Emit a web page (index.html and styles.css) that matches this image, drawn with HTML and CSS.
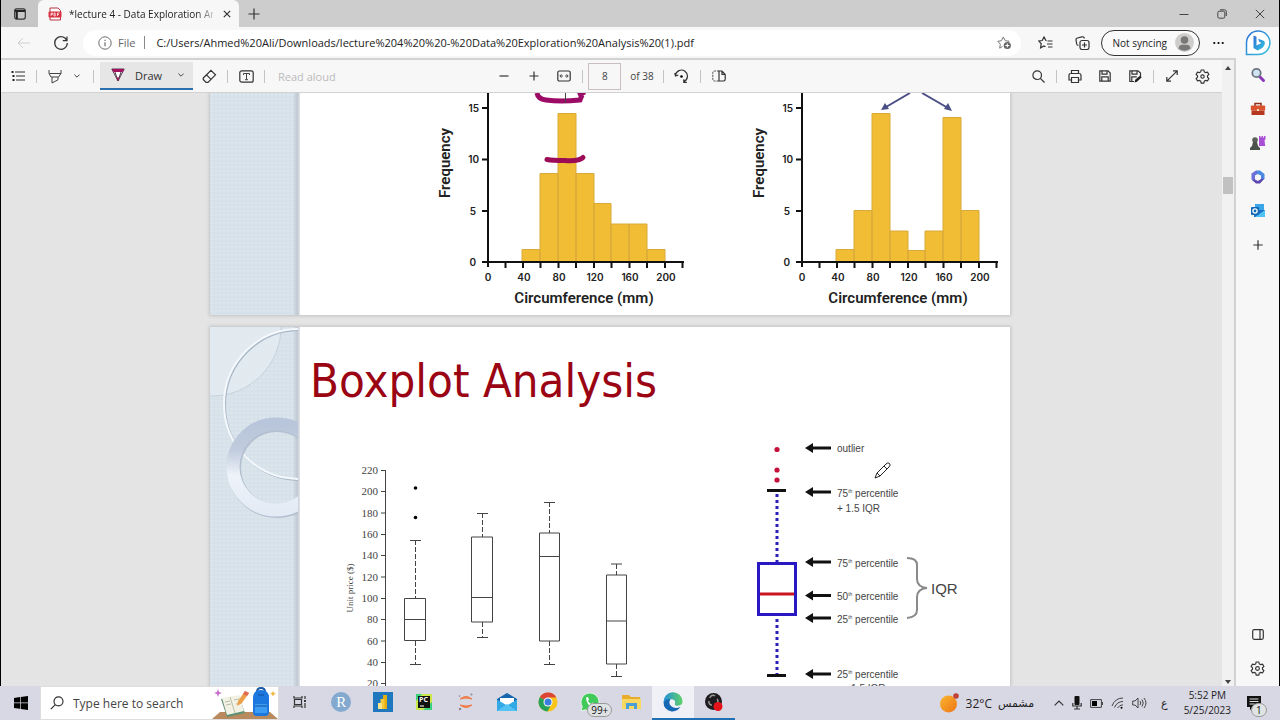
FILE: index.html
```html
<!DOCTYPE html>
<html lang="en">
<head>
<meta charset="utf-8">
<title>lecture 4 - Data Exploration Analysis</title>
<link rel="stylesheet" href="styles.css">
</head>
<body>
<div class="desktop">
  <div class="browser">
    <header class="tabs">
      <button class="ib tab-menu" aria-label="Tab actions"><svg width="12" height="12" viewBox="0 0 12 12"><rect x=".7" y=".9" width="10.6" height="10.2" rx="2" class="ln bold"/><path d="M1 3h10M2.800 3v8" class="ln heavy"/></svg></button>
      <div class="tab">
        <svg width="14" height="14" viewBox="0 0 14 14"><path d="M2 1h8l2.500 2.500V13H2z" fill="#fff" stroke="#b5343e"/><rect x=".5" y="4.500" width="13" height="6" rx="1" fill="#d9303f"/><path d="M3 9V6h1.500v1.500H3M6 6v3h1.200V6zM9.500 9V6h2M9.500 7.500h1.500" fill="none" stroke="#fff" stroke-width=".7"/></svg>
        <span class="tab-title">*lecture 4 - Data Exploration Ana</span>
        <button class="tab-close" aria-label="Close tab"><svg width="8" height="8" viewBox="0 0 8 8"><path d="M.8.8l6.400 6.400M7.200.8L.8 7.200" class="ln bold"/></svg></button>
      </div>
      <button class="ib" aria-label="New tab"><svg width="12" height="12" viewBox="0 0 12 12"><path d="M6 .5v11M.5 6h11" class="ln bold"/></svg></button>
      <div class="window-buttons">
        <button aria-label="Minimize"><svg width="10" height="10" viewBox="0 0 10 10"><path d="M.5 5.500h9" class="ln"/></svg></button>
        <button aria-label="Restore"><svg width="10" height="10" viewBox="0 0 10 10"><rect x=".8" y="2.200" width="7" height="7" rx="1.500" class="ln"/><path d="M3 .8h4.500Q9.300.8 9.300 2.600V7" class="ln"/></svg></button>
        <button aria-label="Close"><svg width="10" height="10" viewBox="0 0 10 10"><path d="M.8.8l8.400 8.400M9.200.8L.8 9.200" class="ln"/></svg></button>
      </div>
    </header>

    <div class="below">
      <div class="main">
        <div class="address-row">
          <button class="nav" aria-label="Back"><svg width="14" height="12" viewBox="0 0 14 12"><path d="M13 6H1M6 1L1 6l5 5" fill="none" stroke="#cfcfcf"/></svg></button>
          <button class="nav" aria-label="Refresh"><svg width="16" height="16" viewBox="0 0 16 16"><path d="M13.800 5.500A6.300 6.300 0 1 0 14.300 8M14 1.500v4.200H9.800" class="ln bold"/></svg></button>
          <div class="omnibox">
            <svg width="14" height="14" viewBox="0 0 14 14"><circle cx="7" cy="7" r="6.200" fill="none" stroke="#6b6b6b"/><path d="M7 6.200v4M7 3.700v1.200" stroke="#6b6b6b" stroke-width="1.200"/></svg>
            <span class="scheme">File</span><span class="bar"></span>
            <input class="url" aria-label="Address" value="C:/Users/Ahmed%20Ali/Downloads/lecture%204%20%20-%20Data%20Exploration%20Analysis%20(1).pdf">
            <button class="fav" aria-label="Add to favorites"><svg width="15" height="15" viewBox="0 0 15 15"><path d="M5.500 11.500l-2.800 1.700.6-4L.8 6.300l3.600-.6L6.300 2l1.900 3.700 4 .6-1.700 1.500" fill="none" stroke="#777"/><circle cx="10.300" cy="10.500" r="3.600" fill="#666"/><path d="M10.300 8.500v4M8.300 10.500h4" stroke="#fff"/></svg></button>
          </div>
          <button class="act" aria-label="Favorites"><svg width="15" height="14" viewBox="0 0 15 14"><path d="M8.500 4.700L7.800 4.300 6 1 4.200 4.500.8 5l2.400 2.600-.6 4.200L6 9.900l1.500.8M9.500 5h5M9 8h5.500M10 11h4.500" class="ln bold"/></svg></button>
          <button class="act" aria-label="Collections"><svg width="15" height="14" viewBox="0 0 15 14"><rect x="5" y="4.500" width="9" height="9" rx="2" class="ln bold"/><path d="M9.500 6.500v5M7 9h5M3.500 9.500Q2 9.500 1.700 8L1 4Q.8 2.500 2.300 2L7 .8Q9 .4 9.400 2.500" class="ln bold"/></svg></button>
          <button class="profile"><span>Not syncing</span><svg width="19" height="19" viewBox="0 0 19 19"><circle cx="9.500" cy="9.500" r="9.500" fill="#cfcdcb"/><circle cx="9.500" cy="7" r="3.800" fill="#7a7876"/><path d="M3.500 15.500Q4 11.700 7 11.700h5q3 0 3.500 3.800Q9.500 20 3.500 15.500" fill="#7a7876"/></svg></button>
          <button class="more" aria-label="Settings and more"><svg width="11" height="4" viewBox="0 0 11 4"><circle cx="1.300" cy="2" r="1.100"/><circle cx="5.500" cy="2" r="1.100"/><circle cx="9.700" cy="2" r="1.100"/></svg></button>
        </div>

        <div class="viewer">
          <div class="document">
            <div class="pdfbar">
              <div class="group">
                <button class="tool small" aria-label="Contents"><svg width="15" height="12" viewBox="0 0 15 12"><path d="M4 2h10M5 6h9M5 10h9" class="ln bold"/><path d="M.5 2h2M1.500 6h2M1.500 10h2" class="ln heavy"/></svg></button>
                <i class="sep wide"></i>
                <button class="tool small" aria-label="Highlight"><svg width="14" height="15" viewBox="0 0 14 15"><path d="M1 1v3.500L3 8h7.500L13 4.500V1M1.500 4.500H13M4 8v6l6-3.200V8" class="ln"/></svg></button>
                <button class="drop" aria-label="Highlight options"><svg width="6" height="4" viewBox="0 0 6 4"><path d="M.4.6L3 3.200 5.600.6" class="ln"/></svg></button>
                <i class="sep wide"></i>
                <button class="draw"><svg width="14" height="14" viewBox="0 0 14 14"><path d="M.8 1h12.400L7 13z" fill="#fff" stroke="#513c4c"/><path d="M.8 1h12.400l-1.500 3H2.500z" fill="#a3125e"/><path d="M4 4l3 9 3-9" fill="none" stroke="#513c4c"/><path d="M5.500 9.500h3L7 13z" fill="#a3125e"/></svg><span>Draw</span><svg width="6" height="4" viewBox="0 0 6 4"><path d="M.4.6L3 3.200 5.600.6" class="ln"/></svg></button>
                <button class="tool small" aria-label="Erase"><svg width="15" height="15" viewBox="0 0 15 15"><path d="M9 1.300l4.500 4.500-7.500 7.500H4L1.300 10.500Q.8 9.800 1.300 9zM4.500 5.800L9 10.300" class="ln bold"/></svg></button>
                <i class="sep wide"></i>
                <button class="tool small" aria-label="Add text"><svg width="15" height="13" viewBox="0 0 15 13"><rect x=".8" y=".8" width="13.400" height="11.400" rx="2" class="ln bold"/><path d="M4.500 5V3.500h6V5M7.500 3.500v6M6 9.700h3" class="ln"/></svg></button>
                <i class="sep wide"></i>
                <button class="read" disabled>Read aloud</button>
              </div>
              <div class="group">
                <button class="tool" aria-label="Zoom out"><svg width="10" height="10" viewBox="0 0 10 10"><path d="M.5 5h9" class="ln bold"/></svg></button>
                <button class="tool" aria-label="Zoom in"><svg width="10" height="10" viewBox="0 0 10 10"><path d="M.5 5h9M5 .5v9" class="ln bold"/></svg></button>
                <button class="tool" aria-label="Fit to width"><svg width="14" height="12" viewBox="0 0 14 12"><rect x=".8" y="1" width="12.400" height="10" rx="1.500" class="ln bold"/><path d="M3 6h3M8 6h3M4.500 4.300L2.800 6l1.700 1.700M9.500 4.300L11.200 6 9.500 7.700" class="ln"/></svg></button>
                <i class="sep"></i>
                <label class="page"><input value="8" aria-label="Page number"><span>of 38</span></label>
                <i class="sep"></i>
                <button class="tool" aria-label="Rotate"><svg width="15" height="15" viewBox="0 0 15 15"><path d="M1.500 6.500A6 6 0 1 1 10 12.500M.8 4l.7 3 2.800-1M12.800 13.300H9.800v-3" class="ln bold"/><circle cx="7.500" cy="7.500" r="1.300"/></svg></button>
                <i class="sep"></i>
                <button class="tool" aria-label="Page view"><svg width="14" height="12" viewBox="0 0 14 12"><path d="M7 1v10h4.500q1.700 0 1.700-1.700V4.500L10 1zM10 1v3.500h3" class="ln bold"/><path d="M7 1H2.500Q.8 1 .8 2.700v6.600Q.8 11 2.500 11H7" class="ln" stroke-dasharray="2 1"/></svg></button>
              </div>
              <div class="group end">
                <button class="tool" aria-label="Find"><svg width="13" height="13" viewBox="0 0 13 13"><circle cx="5.200" cy="5.200" r="4.300" class="ln bold"/><path d="M8.300 8.300l4.200 4.200" class="ln bold"/></svg></button>
                <i class="sep"></i>
                <button class="tool" aria-label="Print"><svg width="14" height="13" viewBox="0 0 14 13"><path d="M3.500 3.500v-3h7v3M3.500 10H1V5.500q0-2 2-2h8q2 0 2 2V10h-2.500M3.500 7.500h7v5h-7z" class="ln bold"/></svg></button>
                <button class="tool" aria-label="Save"><svg width="12" height="12" viewBox="0 0 12 12"><path d="M.8.8H9l2.200 2.200v8.200H.8zM3 .8v3.400h5V.8M2.800 11V6.800h6.400V11" class="ln bold"/></svg></button>
                <button class="tool" aria-label="Save as"><svg width="13" height="13" viewBox="0 0 13 13"><path d="M5 11.500H.8V.8H9l2.500 2.200v3M3 .8v3.400h5V.8M2.800 11V6.800h5" class="ln bold"/><path d="M5.500 12.500l.7-2.700 5-4.300 1.500 1.700-4.700 4.600z" fill="#222"/></svg></button>
                <i class="sep"></i>
                <button class="tool" aria-label="Full screen"><svg width="12" height="12" viewBox="0 0 12 12"><path d="M.8 11.200L11.200.8M7 .8h4.200V5M.8 7v4.200H5" class="ln bold"/></svg></button>
                <button class="tool" aria-label="PDF settings"><svg width="15" height="15" viewBox="0 0 16 16"><path d="M6.600 1h2.800l.5 2 1.500.9 2-.6 1.400 2.400-1.500 1.500v1.600l1.500 1.500-1.400 2.400-2-.6-1.500.9-.5 2H6.600l-.5-2-1.500-.9-2 .6-1.400-2.400 1.500-1.500V7.200L1.200 5.700l1.400-2.400 2 .6L6.100 3z" class="ln bold"/><circle cx="8" cy="8" r="1.800" class="ln bold"/></svg></button>
              </div>
            </div>

            <div class="pages">
              <section class="slide">
                <div class="rail"></div>
                <div class="slide-body histograms">
                  <svg class="chart" width="270" height="222" viewBox="0 0 270 222">
                    <g class="bars"><path d="M92 156.500h18V169H92zM110 80.500h18V169h-18zM128 20.500h18V169h-18zM146 80.500h18V169h-18zM164 110.500h17V169h-17zM181 131h18v38h-18zM199 131h18v38h-18zM217 156.500h18V169h-18z"/></g>
                    <path class="axis" d="M58 0v174M52 169h202M52 15h6M52 66.500h6M52 118h6M75.500 169v6M93 169v6M110.500 169v6M128.500 169v6M146 169v6M164 169v6M181.500 169v6M199.500 169v6M217 169v6M235 169v6M252.500 169v6"/>
                    <g class="ticks end-text"><text x="49" y="19">15</text><text x="49" y="70">10</text><text x="46" y="122">5</text><text x="46" y="173">0</text></g>
                    <g class="ticks mid-text"><text x="58" y="188">0</text><text x="94" y="188">40</text><text x="129" y="188">80</text><text x="165" y="188">120</text><text x="200" y="188">160</text><text x="236" y="188">200</text></g>
                    <g class="titles mid-text"><text x="154" y="210">Circumference (mm)</text><text transform="translate(20 70) rotate(-90)">Frequency</text></g>
                    <path d="M107 0q1 6 9 7q14 2 34 0l2-5M148 2l7-3" fill="none" stroke="#9c0b66" stroke-width="5"/>
                    <path d="M135.500 0v10" stroke="#444"/>
                    <path d="M117 66.500q5 1 18 1q14 1 18-3" fill="none" stroke="#9c0b55" stroke-width="5" stroke-linecap="round"/>
                  </svg>
                  <svg class="chart" width="270" height="222" viewBox="0 0 270 222">
                    <g class="bars"><path d="M92 156.500h18V169H92zM110 117.500h18V169h-18zM128 20.500h18V169h-18zM146 138h18v31h-18zM164 157.500h17V169h-17zM181 138h18v31h-18zM199 24.500h18V169h-18zM217 117.500h18V169h-18z"/></g>
                    <path class="axis" d="M58 0v174M52 169h202M52 15h6M52 66.500h6M52 118h6M75.500 169v6M93 169v6M110.500 169v6M128.500 169v6M146 169v6M164 169v6M181.500 169v6M199.500 169v6M217 169v6M235 169v6M252.500 169v6"/>
                    <g class="ticks end-text"><text x="49" y="19">15</text><text x="49" y="70">10</text><text x="46" y="122">5</text><text x="46" y="173">0</text></g>
                    <g class="ticks mid-text"><text x="58" y="188">0</text><text x="94" y="188">40</text><text x="129" y="188">80</text><text x="165" y="188">120</text><text x="200" y="188">160</text><text x="236" y="188">200</text></g>
                    <g class="titles mid-text"><text x="154" y="210">Circumference (mm)</text><text transform="translate(20 70) rotate(-90)">Frequency</text></g>
                    <path d="M166 0l-24 14M178 0l26 15" stroke="#4a4f85" stroke-width="2"/>
                    <path d="M137 17l4-7 4 6zM208 18l-4-8-4 6z" fill="#4a4f85"/>
                  </svg>
                </div>
              </section>

              <section class="slide second">
                <div class="rail">
                  <svg width="88" height="370" viewBox="0 0 88 370">
                    <defs><linearGradient id="ring" x1="0" y1="0" x2="0" y2="1"><stop offset="0" stop-color="#b9c5da"/><stop offset=".3" stop-color="#c0cbdd"/><stop offset=".6" stop-color="#eef3fa"/><stop offset="1" stop-color="#e4ebf5"/></linearGradient></defs>
                    <circle cx="2" cy="0" r="69" fill="#e6eef3" fill-opacity=".65" stroke="#c5d2dc"/>
                    <circle cx="90" cy="78" r="75" fill="none" stroke="#a9b8c8" stroke-width="2"/>
                    <circle cx="89" cy="77" r="75" fill="none" stroke="#f5f9fc" stroke-width="2"/>
                    <circle cx="67" cy="141" r="43" fill="none" stroke="#b3c0d0" stroke-width="14"/>
                    <circle cx="66" cy="140" r="43" fill="none" stroke="url(#ring)" stroke-width="13"/>
                  </svg>
                </div>
                <div class="slide-body">
                  <h1>Boxplot Analysis</h1>
                  <div class="figures">
                    <svg class="chart" width="310" height="260" viewBox="340 437 310 260">
                      <path class="thin" d="M385.500 470v230M381 470.500h4M381 491.500h4M381 513h4M381 534.500h4M381 555.500h4M381 577h4M381 598.500h4M381 619.500h4M381 641h4M381 662.500h4M381 683.500h4"/>
                      <g class="prices end-text"><text x="378" y="474">220</text><text x="378" y="495">200</text><text x="378" y="517">180</text><text x="378" y="538">160</text><text x="378" y="559">140</text><text x="378" y="581">120</text><text x="378" y="602">100</text><text x="378" y="623">80</text><text x="378" y="645">60</text><text x="378" y="666">40</text><text x="378" y="687">20</text></g>
                      <text class="prices price-title mid-text" transform="translate(353 588) rotate(-90)">Unit price ($)</text>
                      <path class="thin" d="M404.500 598.500h21v42h-21zM404.500 619.500h21M410 540.500h11M410 664.500h11M471.500 537h21v85h-21zM471.500 597.500h21M477 513.500h11M477 637.500h11M539.500 533h20v108h-20zM539.500 556.500h20M544 502.500h11M544 664.500h11M606.500 575h20v89h-20zM606.500 621h20M611 564h11M611 676.500h11"/>
                      <path class="thin" stroke-dasharray="5 2" d="M415.500 540v58M415.500 641v23M482.500 513v24M482.500 622v15M549.500 502v31M549.500 641v23M616.500 564v11M616.500 664v12"/>
                      <circle cx="415.500" cy="488" r="1.800"/><circle cx="415.500" cy="517.500" r="1.800"/>
                    </svg>
                    <svg class="chart" width="220" height="260" viewBox="750 437 220 260">
                      <g fill="#c4123c"><circle cx="777" cy="449.500" r="2.600"/><circle cx="777" cy="470" r="2.600"/><circle cx="777" cy="480" r="2.600"/></g>
                      <path d="M777 494v68M777 619v56" stroke="#2a1fb8" stroke-width="3" stroke-dasharray="3 3"/>
                      <path d="M767 490.500h19M767 675.500h19" stroke="#111" stroke-width="3"/>
                      <path d="M758.500 563.500h37v51h-37z" fill="none" stroke="#2a18c0" stroke-width="3"/>
                      <path d="M760 594h34" stroke="#c9151e" stroke-width="3"/>
                      <path d="M810 448h21M810 492h21M810 562h21M810 595.500h21M810 618h21M810 674h21" stroke="#111" stroke-width="3"/>
                      <path d="M805 448l8-5v10zM805 492l8-5v10zM805 562l8-5v10zM805 595.500l8-5v10zM805 618l8-5v10zM805 674l8-5v10z" fill="#111"/>
                      <g class="notes"><text x="837" y="452">outlier</text><text x="837" y="497">75<tspan class="sup" dy="-4">th</tspan><tspan dy="4"> percentile</tspan></text><text x="837" y="512">+ 1.5 IQR</text><text x="837" y="567">75<tspan class="sup" dy="-4">th</tspan><tspan dy="4"> percentile</tspan></text><text x="837" y="600">50<tspan class="sup" dy="-4">th</tspan><tspan dy="4"> percentile</tspan></text><text x="837" y="623">25<tspan class="sup" dy="-4">th</tspan><tspan dy="4"> percentile</tspan></text><text x="837" y="678">25<tspan class="sup" dy="-4">th</tspan><tspan dy="4"> percentile</tspan></text><text x="845" y="692">- 1.5 IQR</text><text class="iqr" x="931" y="594">IQR</text></g>
                      <path d="M907 558q10 0 10 7v14q0 8 10 9q-10 1-10 9v13q0 7-10 8" fill="none" stroke="#8a8a8a" stroke-width="2"/>
                      <path d="M875 478l2-5 9-9q2-2 3.500-.5t-.5 3.500l-9 9zM877 473l3 3M884 466l3 3" fill="#fff" stroke="#222"/>
                    </svg>
                  </div>
                </div>
              </section>
            </div>
          </div>
          <div class="scrollbar"><svg width="6" height="4" viewBox="0 0 6 4"><path d="M0 4l3-4 3 4z" fill="#444"/></svg><div class="track"><div class="thumb"></div></div><svg width="6" height="4" viewBox="0 0 6 4"><path d="M0 0l3 4 3-4z" fill="#444"/></svg></div>
        </div>
      </div>

      <aside class="sidebar">
        <button class="bing" aria-label="Bing"><svg width="26" height="26" viewBox="0 0 26 26"><defs><linearGradient id="b1" x1="0" y1="0" x2="1" y2="1"><stop offset="0" stop-color="#2c6fd6"/><stop offset="1" stop-color="#35c4dd"/></linearGradient></defs><path d="M1.500 24.500V13A11.700 11.700 0 1 1 13 24.500z" fill="#fff" stroke="url(#b1)" stroke-width="1.500"/><path d="M8.500 5.500l3 1.200v8.800l5-2.600-2.300-1.200-1-3 6 2.300q1 1 .5 3.500l-2 3.200-5.200 2.800-4-2.500z" fill="url(#b1)"/></svg></button>
        <button aria-label="Search"><svg width="16" height="16" viewBox="0 0 16 16"><path d="M9.500 9.500l4 4" stroke="#8a37b8" stroke-width="3" stroke-linecap="round"/><circle cx="6.500" cy="6" r="4.200" fill="#cfe3f3" stroke="#6c7480" stroke-width="1.800"/></svg></button>
        <button aria-label="Shopping tools"><svg width="16" height="16" viewBox="0 0 16 16"><path d="M5 5V2.500h6V5" fill="none" stroke="#8c2e19" stroke-width="1.500"/><rect x=".8" y="4.500" width="14.400" height="5" rx="1" fill="#d9532e"/><path d="M1.500 9.500h13V14h-13z" fill="#b53920"/><rect x="7" y="8" width="2" height="2" fill="#f8d9b0"/></svg></button>
        <button aria-label="Games"><svg width="16" height="16" viewBox="0 0 16 16"><path d="M9 1h1.500v1.500h1V1H13v1.500h1V1h1.500v3.500l-1 .5.700 6H9z" fill="#a94fd6"/><circle cx="5" cy="5" r="2.800" fill="#5a5f59"/><path d="M3 7h4l1 4 2 2v2H0v-2l2-2z" fill="#4b514b"/></svg></button>
        <button aria-label="Microsoft 365"><svg width="16" height="16" viewBox="0 0 16 16"><path d="M6 1.500L1.500 4.500v6L5 12V6.500L9.500 4z" fill="#6b6fd8"/><path d="M6 1.500h4L14.500 5v5L11 11V6.500L7.500 5z" fill="#4a8ae0"/><path d="M14.500 9.500L10 14.500H6L2 11l3-.5L8 12l3-2z" fill="#5c46b0"/></svg></button>
        <button aria-label="Outlook"><svg width="16" height="16" viewBox="0 0 16 16"><path d="M5 1h9v7H5z" fill="#38a6e8"/><path d="M4 7h11v7H4z" fill="#1b6ec2"/><path d="M5 14l10-7v7z" fill="#4fc3f2"/><rect x="1" y="4" width="8" height="8" rx="1" fill="#1268b8"/><circle cx="5" cy="8" r="2.100" fill="none" stroke="#fff" stroke-width="1.300"/></svg></button>
        <button aria-label="Customize"><svg width="10" height="10" viewBox="0 0 10 10"><path d="M5 .3v9.400M.3 5h9.400" class="ln bold"/></svg></button>
        <span class="spacer"></span>
        <button aria-label="Hide sidebar"><svg width="12" height="11" viewBox="0 0 12 11"><rect x=".7" y=".7" width="10.600" height="9.600" rx="1.500" class="ln bold"/><path d="M8 1v9" class="ln bold"/></svg></button>
        <button aria-label="Sidebar settings"><svg width="15" height="15" viewBox="0 0 16 16"><path d="M6.600 1h2.800l.5 2 1.500.9 2-.6 1.400 2.400-1.500 1.500v1.600l1.500 1.500-1.400 2.400-2-.6-1.500.9-.5 2H6.600l-.5-2-1.500-.9-2 .6-1.400-2.400 1.500-1.500V7.200L1.200 5.700l1.400-2.400 2 .6L6.100 3z" class="ln bold"/><circle cx="8" cy="8" r="2" class="ln bold"/></svg></button>
      </aside>
    </div>
  </div>

  <footer class="taskbar">
    <button class="start" aria-label="Start"><svg width="14" height="14" viewBox="0 0 14 14"><path d="M0 2l6-.9v5.500H0zM6.700 1L14 0v6.600H6.700zM0 7.300h6v5.500L0 12zM6.700 7.300H14V14l-7.300-1z"/></svg></button>
    <label class="search">
      <svg width="14" height="14" viewBox="0 0 14 14"><circle cx="8.500" cy="5.300" r="4.500" class="ln bold"/><path d="M5.300 8.700L.8 13.200" class="ln bold"/></svg>
      <input placeholder="Type here to search" aria-label="Search">
      <svg width="66" height="32" viewBox="0 0 66 32"><path d="M8 25h50l8 7H0z" fill="#b98a5e"/><path d="M9 12l18-3 6 17-18 4z" fill="#5d8f72"/><path d="M10 11l17-3 5 16-17 4z" fill="#f3f1e4"/><path d="M18 10l5 16M13 15l5-1M14 18l5-1M22 13l5-1M24 17l5-1" stroke="#b9c0aa"/><path d="M25 19l1-5 7-10 4 2-7 10z" fill="#eda04a"/><path d="M33 4l4 2-2 3-4-2z" fill="#e06a58"/><path d="M45 5q0-4 4-4t4 4" fill="none" stroke="#1659a8" stroke-width="2"/><path d="M41 11q0-8 8-8t8 8v14q0 4-4 4h-8q-4 0-4-4z" fill="#1c78df"/><path d="M43 17h12v9H43z" fill="#3c9cf4"/><path d="M43 19h12M46 8h6" stroke="#134e9b"/><path d="M6 2l1 3 3 1-3 1-1 3-1-3-3-1 3-1z" fill="#c667c9"/><path d="M61 4l1 2 2 .500-2 1-1 2-1-2-2-1 2-.5z" fill="#f0b43c"/></svg>
    </label>
    <nav class="apps">
      <button aria-label="Task view"><svg width="14" height="14" viewBox="0 0 14 14"><path d="M1 1v2h8V1M1 13v-2h8v2M1.500 4.500h7v5h-7zM12 1v3M12 8v5" class="ln bold"/><circle cx="12" cy="6" r="1"/></svg></button>
      <button aria-label="R"><span class="rlogo">R</span></button>
      <button aria-label="Power BI"><svg width="20" height="20" viewBox="0 0 20 20"><rect width="20" height="20" fill="#1f78bd"/><path d="M10 3h4v14h-4z" fill="#e6ad10"/><path d="M7.500 7h4v10h-4z" fill="#f4c93a"/><path d="M5 11h4v6H5z" fill="#fbe68c"/></svg></button>
      <button aria-label="PyCharm"><svg width="16" height="16" viewBox="0 0 16 16"><path d="M0 0h16v16H0z" fill="#cbe84a"/><path d="M0 7l6-7H0zM16 16H7l9-8z" fill="#3cd17c"/><path d="M2 2h12v12H2z" fill="#111"/><path d="M4 12h4" stroke="#fff"/><text x="3" y="8" class="pc">PC</text></svg></button>
      <button aria-label="Jupyter"><svg width="16" height="18" viewBox="0 0 16 18"><path d="M2 6q6-5 12 0-6-2-12 0zM2 12q6 5 12 0-6 2-12 0z" fill="#ef7d4a" stroke="#ef7d4a"/><circle cx="13.500" cy="1.500" r="1" fill="#888"/><circle cx="2" cy="16" r="1.200" fill="#888"/><circle cx="1.500" cy="3" r=".8" fill="#888"/></svg></button>
      <button aria-label="Mail"><svg width="20" height="18" viewBox="0 0 20 18"><path d="M0 6l10-6 10 6v12H0z" fill="#1666ad"/><path d="M3 5h14v6l-7 4-7-4z" fill="#fff"/><path d="M0 6.500l10 6 10-6V18H0z" fill="#32a9e4"/><path d="M0 18l10-7 10 7z" fill="#52c3f4"/></svg></button>
      <button aria-label="Chrome"><svg width="20" height="20" viewBox="0 0 20 20"><circle cx="10" cy="10" r="9.500" fill="#f8c61b"/><path d="M10 10L1.800 5.200A9.500 9.500 0 0 1 18.300 5.500H10z" fill="#dc4437"/><path d="M10 10L1.800 5.200A9.500 9.500 0 0 0 9.500 19.500l4-7.500z" fill="#25a15a"/><circle cx="10" cy="10" r="4.500" fill="#fff"/><circle cx="10" cy="10" r="3.500" fill="#3b7de0"/></svg></button>
      <button class="badged" aria-label="WhatsApp"><svg width="20" height="20" viewBox="0 0 20 20"><path d="M1 19l1.200-4.500A9 9 0 1 1 5.500 17.800z" fill="#3fca5a" stroke="#e9f6ec"/><path d="M6 5.500l1.800-.5 1.200 2.500-1 1.500q1 2 3.200 3l1.300-1.500 2.500 1.300q-.5 2.700-3 2.700Q6.500 13 6 5.500" fill="#fff"/></svg><span class="badge">99+</span></button>
      <button aria-label="File Explorer"><svg width="19" height="16" viewBox="0 0 19 16"><path d="M0 1h7l2 2h9v12H0z" fill="#e9ad2d"/><path d="M0 5h19v10H0z" fill="#fbd764"/><path d="M4 15V9h11v6h-3v-3H7v3z" fill="#4a9fd8"/></svg></button>
      <button class="active" aria-label="Edge"><svg width="20" height="20" viewBox="0 0 20 20"><defs><linearGradient id="e1" x1="0" y1="0" x2="1" y2="0"><stop offset="0" stop-color="#2391d9"/><stop offset="1" stop-color="#5fd169"/></linearGradient></defs><path d="M.5 10a9.500 9.500 0 0 1 19-.5q0 4-4.500 4.200-3.500 0-3-2 1-4-3-4.500Q3 7 .5 10" fill="url(#e1)"/><path d="M.5 10Q3 6.500 7.500 7.200 5 11 8 14q4 3.500 9.500.8Q14 20 8.500 19.400.5 18 .5 10" fill="#1668b5"/></svg></button>
      <button class="running" aria-label="OBS"><svg width="18" height="20" viewBox="0 0 18 20"><circle cx="8.500" cy="9.500" r="8.500" fill="#1e1c1e"/><path d="M5 6a3 3 0 0 1 5-2M12 7a3 3 0 0 1-1 5M4 9a3 3 0 0 0 3 4" fill="none" stroke="#999" stroke-width="1.500"/><circle cx="13" cy="14.500" r="4.500" fill="#e31319"/></svg></button>
    </nav>
    <div class="tray">
      <svg class="sun" width="19" height="20" viewBox="0 0 19 20"><defs><linearGradient id="s1" x1="0" y1="0" x2="1" y2="1"><stop offset="0" stop-color="#f9b62d"/><stop offset="1" stop-color="#ee7417"/></linearGradient></defs><circle cx="8.500" cy="11" r="8.500" fill="url(#s1)"/><circle cx="16" cy="3" r="2.800" fill="#bf4138"/></svg>
      <span class="temp">32°C</span><span class="weather" lang="ar">مشمس</span>
      <svg class="slot" width="10" height="6" viewBox="0 0 10 6"><path d="M.7 5.300L5 1l4.300 4.300" class="ln bold"/></svg>
      <svg class="slot" width="10" height="14" viewBox="0 0 10 14"><rect x="2.500" y="0" width="5" height="9" rx="1" fill="#111"/><path d="M.8 7v3h8.400V7M5 10v3M2 13h6" class="ln bold"/></svg>
      <svg class="slot" width="13" height="9" viewBox="0 0 13 9"><path d="M.6.6h10.800v7.800H.6zM12.500 3v3" class="ln"/><path d="M2 2h5v5H2z"/></svg>
      <svg class="slot" width="13" height="12" viewBox="0 0 13 12"><path d="M1 9Q4 1 12 1M3.500 10.500Q6 4.500 12 4.500M6.500 11Q8.500 7.800 12 7.800" class="ln"/><circle cx="10.500" cy="10.800" r="1"/></svg>
      <svg class="slot" width="15" height="12" viewBox="0 0 15 12"><path d="M.7 4v4H3l3 3V1L3 4zM8 4q1.500 2 0 4M10 2.500q2.500 3.500 0 7M12 1q4 5 0 10" class="ln"/></svg>
      <span class="lang" lang="ar">ع</span>
      <div class="clock"><span>5:52 PM</span><span>5/25/2023</span></div>
      <button class="badged notice" aria-label="Notifications"><svg width="14" height="14" viewBox="0 0 14 14"><path d="M0 0h14v11H7l-4 3v-3H0z" fill="#111"/><path d="M2.500 3h9M2.500 5.500h9M2.500 8h5" stroke="#ddd"/></svg><span class="badge">1</span></button>
    </div>
  </footer>
</div>
</body>
</html>
```
FILE: styles.css
```css
* { box-sizing: border-box; }
body { margin: 0; font-family: "Open Sans", "Noto Sans", sans-serif; font-size: 11px; color: #333; }
button, input { font: inherit; color: inherit; border: 0; background: none; padding: 0; margin: 0; }
button { display: flex; align-items: center; justify-content: center; flex: none; }
svg { display: block; flex: none; }
.ln { fill: none; stroke: #444; stroke-width: 1; }
.ln.bold { stroke: #333; stroke-width: 1.2; }
.ln.heavy { stroke: #222; stroke-width: 2; }

.desktop { display: flex; flex-direction: column; height: 100vh; overflow: hidden; background: #000; }
.browser { display: flex; flex-direction: column; flex: 1; min-height: 0; margin: 0 1px; background: #f7f7f7; }

.tabs { display: flex; align-items: stretch; height: 27px; background: #cdcdcd; }
.ib { width: 30px; }
.tab-menu { width: 37px; background: #c6c6c6; }
.tab { display: flex; align-items: center; gap: 7px; width: 201px; padding: 0 5px 0 10px; background: #f7f7f7; border-radius: 6px 6px 0 0; }
.tab-title { flex: 1; overflow: hidden; white-space: nowrap; font-size: 10px; color: #222; mask-image: linear-gradient(90deg, #000 88%, transparent 104%); }
.tab-close { width: 14px; height: 14px; }
.window-buttons { display: flex; margin-left: auto; }
.window-buttons button { width: 38px; }

.below { display: flex; flex: 1; min-height: 0; }
.main { display: flex; flex-direction: column; flex: 1; min-width: 0; }
.address-row { display: flex; align-items: center; height: 31px; padding-left: 4px; }
.nav { width: 37px; height: 26px; }
.omnibox { display: flex; align-items: center; flex: 1; min-width: 0; height: 26px; margin: 0 6px 0 4px; padding: 0 9px 0 15px; border-radius: 13px; background: #fff; }
.scheme { margin-left: 6px; color: #666; }
.bar { width: 1px; height: 13px; margin: 0 11px 0 9px; background: #888; }
.url { flex: 1; min-width: 0; color: #222; }
.act { width: 37px; }
.profile { gap: 8px; height: 26px; padding: 0 5px 0 11px; border: 1px solid #333; border-radius: 13px; color: #222; font-size: 10px; background: #fafafa; }
.more { width: 36px; }

.viewer { display: flex; flex: 1; min-height: 0; border: 1px solid #d2d2d2; border-width: 2px 2px 0 0; }
.document { display: flex; flex-direction: column; flex: 1; min-width: 0; background: #e4e4e4; }
.pdfbar { display: grid; grid-template-columns: 1fr auto 1fr; height: 33px; background: #f7f7f7; border-bottom: 1px solid #d2d2d2; }
.group { display: flex; align-items: center; }
.group:first-child { padding-left: 5px; }
.end { justify-content: flex-end; padding-right: 5px; }
.tool { width: 30px; height: 26px; }
.tool.small { width: 24px; }
.drop { width: 20px; height: 26px; }
.sep { width: 1px; height: 13px; margin: 0 3px; background: #c4c4c4; }
.sep.wide { margin: 0 6px; }
.draw { gap: 10px; width: 93px; height: 28px; margin-right: 4px; padding-left: 2px; background: #e6e6e6; border-bottom: 2px solid #2a6fae; }
.draw span { margin-right: 6px; }
.read { margin-left: 7px; color: #bbb; }
.page { display: flex; align-items: center; gap: 9px; margin: 0 6px 0 2px; color: #444; font-size: 10px; }
.page input { width: 33px; height: 27px; border: 1px solid #c8c0c0; text-align: center; }

.pages { flex: 1; min-height: 0; overflow: hidden; display: flex; flex-direction: column; align-items: center; gap: 12px; padding-right: 3px; }
.slide { display: flex; flex: none; width: 800px; max-width: 100%; background: #fff; box-shadow: 0 0 3px 1px #c2c2c2; }
.rail { width: 90px; flex: none; background: linear-gradient(90deg, transparent 92%, #c0c8d3 97%, #e4e6e9), radial-gradient(circle, #dce6ed 1px, transparent 1px) 0 0 / 4px 4px, #d6e1ea; }
.slide-body { flex: 1; min-width: 0; }
.histograms { display: flex; gap: 44px; padding-left: 130px; }
.figures { display: flex; gap: 100px; padding-left: 40px; }
.second h1 { margin: 0; padding: 14px 10px 16px; font-size: 47px; line-height: 80px; font-weight: 400; color: #9b0413; font-family: "DejaVu Sans Condensed", "Noto Sans", sans-serif; white-space: nowrap; }
.chart text { font-family: Inter, sans-serif; fill: #222; }
.bars { fill: #f0bd34; stroke: #d8a93b; }
.axis { fill: none; stroke: #111; stroke-width: 2; }
.chart .ticks text { font-size: 10px; font-weight: 600; }
.chart .titles text { font-family: Roboto, sans-serif; font-size: 15px; font-weight: 600; }
.end-text { text-anchor: end; }
.mid-text { text-anchor: middle; }
.thin { fill: none; stroke: #444; }
.chart .prices, .chart .prices text { font-family: "Liberation Serif", serif; font-size: 11px; fill: #444; }
.chart .price-title { font-size: 9px; }
.chart .notes text { font-family: "Liberation Sans", sans-serif; font-size: 10px; fill: #444; }
.chart .notes .iqr { font-size: 15px; }
.sup { font-size: 5px; }

.scrollbar { display: flex; flex-direction: column; align-items: center; width: 12px; padding: 6px 0 2px; background: #f1f1f1; }
.track { flex: 1; width: 10px; padding-top: 107px; }
.thumb { height: 17px; background: #c1c1c1; }

.sidebar { display: flex; flex-direction: column; align-items: center; width: 43px; padding-bottom: 1px; }
.sidebar button { width: 32px; height: 34px; }
.sidebar .bing { height: 31px; }
.spacer { flex: 1; }

.taskbar { display: flex; align-items: stretch; height: 34px; padding-left: 1px; background: #d8d7e4; }
.start { width: 39px; }
.search { display: flex; align-items: center; width: 239px; padding-left: 9px; background: #fff; border: 1px solid #ddd; }
.search input { flex: 1; min-width: 0; margin-left: 9px; font-size: 12px; }
.search input::placeholder { color: #444; opacity: 1; }
.apps { display: flex; width: 456px; }
.apps button { flex: 1; border-bottom: 2px solid transparent; }
.apps .active { background: #f0f0f7; border-color: #1f70b4; }
.apps .running { border-color: #1f70b4; }
.rlogo { width: 20px; height: 20px; border-radius: 50%; background: #83a9cf; color: #fff; font-family: "Liberation Serif", serif; font-size: 15px; line-height: 20px; }
.pc { font: 700 7px "Open Sans", sans-serif; fill: #fff; }
.badged { position: relative; }
.badge { position: absolute; left: 18px; bottom: 1px; padding: 0 3px; border: 1px solid #999; border-radius: 8px; background: #dfe3e4; color: #111; font-size: 10px; line-height: 12px; }
.tray { display: flex; align-items: center; margin-left: auto; padding-right: 4px; color: #222; }
.sun { margin-right: 7px; }
.temp { font-size: 12px; }
.weather { margin: 0 20px 0 6px; font-family: "DejaVu Sans", sans-serif; }
.slot { margin-right: 8px; }
.lang { margin: 0 16px 0 6px; font-family: "DejaVu Sans", sans-serif; }
.clock { display: flex; flex-direction: column; align-items: center; font-size: 10px; line-height: 15px; }
.notice { align-self: stretch; width: 45px; }
.notice .badge { left: 20px; bottom: 3px; padding: 0 4px; }
```
